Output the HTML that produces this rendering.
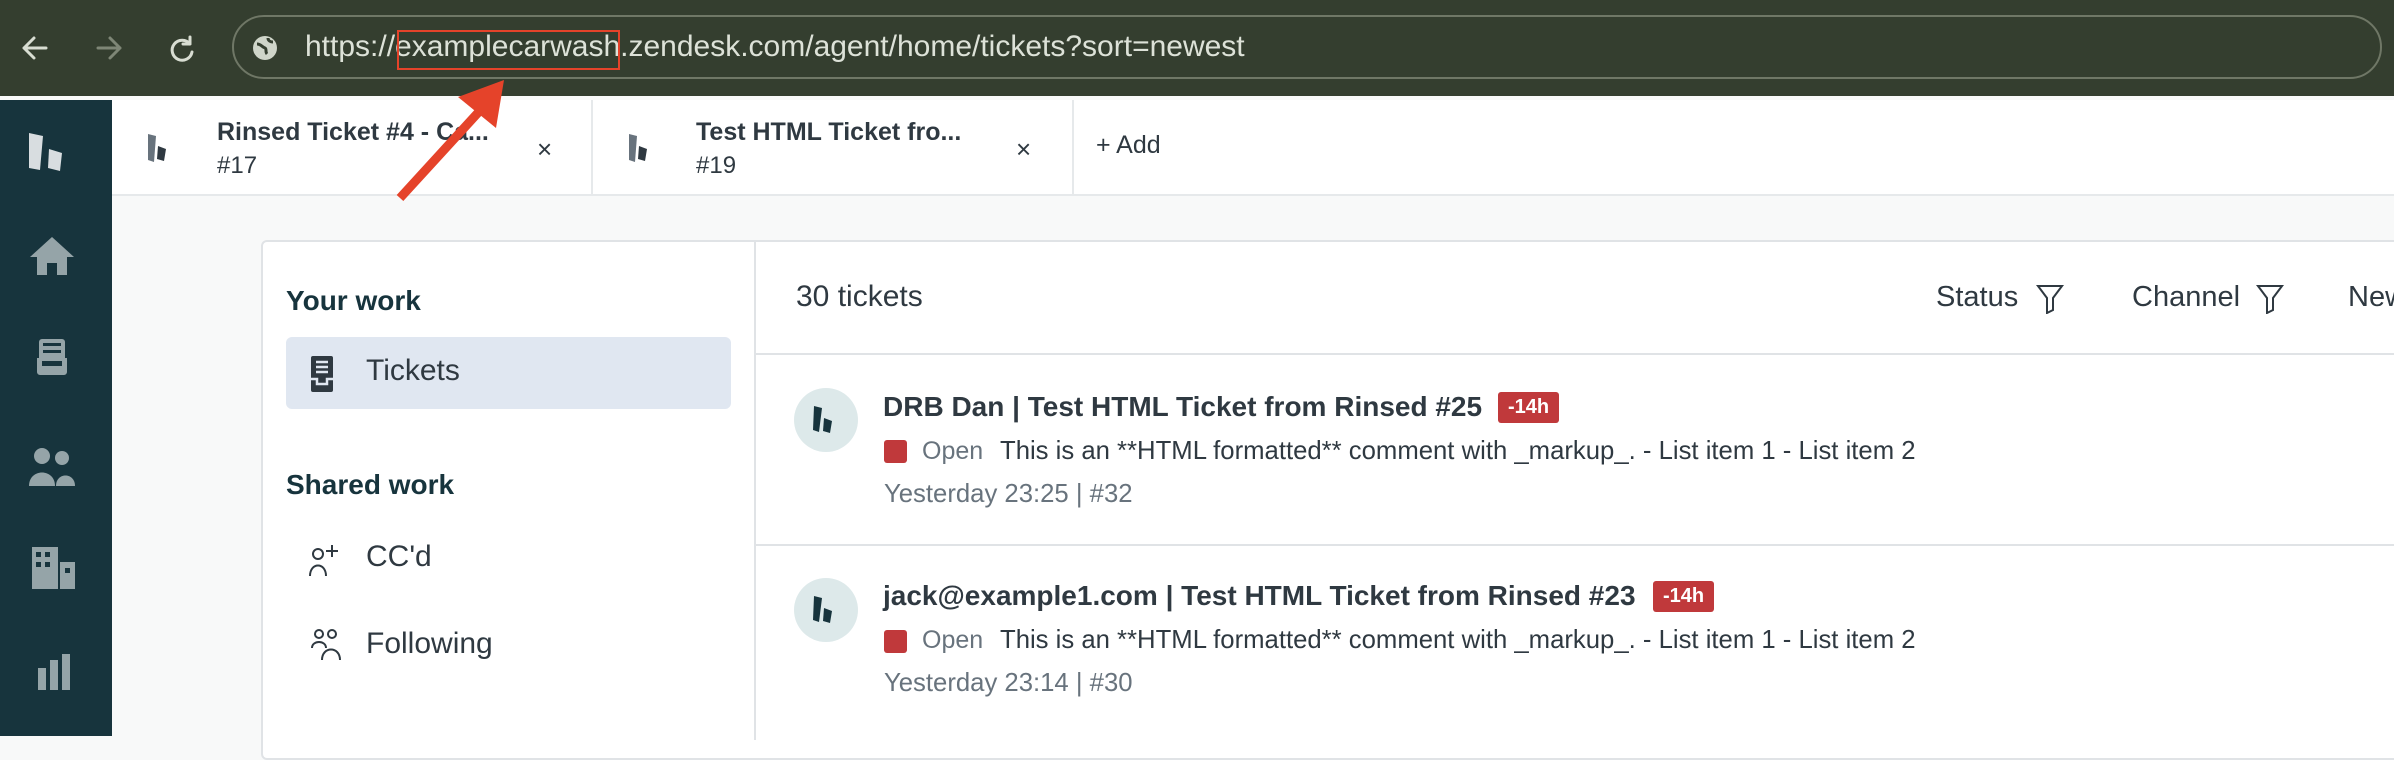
<!DOCTYPE html>
<html><head><style>
*{margin:0;padding:0;box-sizing:border-box}
body{width:2394px;height:736px;overflow:hidden;font-family:"Liberation Sans",sans-serif;background:#f8f9f9;position:relative}
.a{position:absolute;white-space:nowrap}
</style></head><body>
<div class="a" style="left:0;top:0;width:2394px;height:96px;background:#343e2f"></div>
<div class="a" style="left:232px;top:15px;width:2150px;height:64px;border:2px solid #6f7766;border-radius:32px;background:#343e2f"></div>
<svg class="a" style="left:20px;top:34px" width="180" height="30" viewBox="0 0 180 30" fill="none" stroke-width="3" stroke-linecap="round" stroke-linejoin="round">
<path d="M4 14h22M14 4L4 14l10 10" stroke="#d8ddd2"/>
<path d="M78 14h22M90 4l10 10-10 10" stroke="#7e8676"/>
<path d="M170 10a10 10 0 1 0 2 8M170 3v7h-7" stroke="#d8ddd2"/>
</svg>
<svg class="a" style="left:252px;top:35px" width="26" height="26" viewBox="0 0 26 26"><circle cx="13" cy="13" r="12" fill="#cfd5c9"/><path d="M5 9c4 0 5 3 8 4 2 1 0 4 2 6M16 3c0 3 3 4 5 4" stroke="#343e2f" stroke-width="3" fill="none"/></svg>
<div class="a" style="left:305px;top:30px;font-size:30px;color:#dde2d8">https://examplecarwash.zendesk.com/agent/home/tickets?sort=newest</div>
<div class="a" style="left:397px;top:30px;width:223px;height:40px;border:2px solid #e5432a"></div>

<div class="a" style="left:0;top:100px;width:112px;height:636px;background:#17343d"></div>
<svg class="a" style="left:27px;top:131px" width="50" height="42" viewBox="0 0 50 42"><path d="M2 2l14 3-3 34-11-2z" fill="#d8dde0"/><path d="M22 18l13 4-2 18-12-3z" fill="#d8dde0"/></svg>
<svg class="a" style="left:0;top:230px" width="112" height="470" viewBox="0 0 112 470" fill="#95a4a8">
<path d="M52 7L30 27h7v18h10V33h10v12h10V27h7z"/>
<rect x="39" y="109" width="26" height="22" rx="3"/><path d="M37 128h5v8h20v-8h5v14a3 3 0 0 1-3 3H40a3 3 0 0 1-3-3z"/>
<circle cx="42" cy="226" r="8"/><path d="M29 256c0-18 26-18 26 0z"/><circle cx="62" cy="228" r="7"/><path d="M56 256c0-14 19-14 19 0z"/>
<path d="M32 317h26v42H32zM60 332h15v27H60z"/>
<rect x="38" y="438" width="8" height="22"/><rect x="50" y="430" width="8" height="30"/><rect x="62" y="424" width="8" height="36"/>
</svg>
<svg class="a" style="left:0;top:230px" width="112" height="470" viewBox="0 0 112 470" fill="#17343d"><rect x="43" y="113" width="18" height="3"/><rect x="43" y="120" width="18" height="3"/><rect x="36" y="322" width="5" height="5"/><rect x="45" y="322" width="5" height="5"/><rect x="36" y="332" width="5" height="5"/><rect x="45" y="332" width="5" height="5"/><rect x="65" y="338" width="5" height="5"/></svg>

<div class="a" style="left:112px;top:100px;width:2282px;height:96px;background:#fff;border-bottom:2px solid #e6e9eb"></div>
<div class="a" style="left:591px;top:100px;width:2px;height:96px;background:#e6e9eb"></div>
<div class="a" style="left:1072px;top:100px;width:2px;height:96px;background:#e6e9eb"></div>
<svg class="a" style="left:146px;top:132px" width="36" height="32"><path d="M2 2l8 2-2 26-6-2z" fill="#68737d"/><path d="M12 14l8 3-2 12-7-2z" fill="#2f3941"/></svg>
<svg class="a" style="left:627px;top:132px" width="36" height="32"><path d="M2 2l8 2-2 26-6-2z" fill="#68737d"/><path d="M12 14l8 3-2 12-7-2z" fill="#2f3941"/></svg>
<div class="a" style="left:217px;top:118px;font-size:25px;font-weight:bold;color:#2f3941">Rinsed Ticket #4 - Ca...</div>
<div class="a" style="left:217px;top:152px;font-size:24px;color:#2f3941">#17</div>
<div class="a" style="left:537px;top:134px;font-size:26px;color:#2f3941">×</div>
<div class="a" style="left:696px;top:118px;font-size:25px;font-weight:bold;color:#2f3941">Test HTML Ticket fro...</div>
<div class="a" style="left:696px;top:152px;font-size:24px;color:#2f3941">#19</div>
<div class="a" style="left:1016px;top:134px;font-size:26px;color:#2f3941">×</div>
<div class="a" style="left:1096px;top:131px;font-size:25px;color:#2f3941">+ Add</div>

<div class="a" style="left:261px;top:240px;width:2200px;height:520px;background:#fff;border:2px solid #e0e3e6;border-radius:6px"></div>
<div class="a" style="left:754px;top:240px;width:2px;height:500px;background:#e0e3e6"></div>
<div class="a" style="left:756px;top:353px;width:1700px;height:2px;background:#e0e3e6"></div>
<div class="a" style="left:756px;top:544px;width:1700px;height:2px;background:#e0e3e6"></div>
<div class="a" style="left:286px;top:285px;font-size:28px;font-weight:bold;color:#17343d">Your work</div>
<div class="a" style="left:286px;top:337px;width:445px;height:72px;background:#e0e7f1;border-radius:6px"></div>
<svg class="a" style="left:310px;top:355px" width="24" height="38"><rect x="1" y="1" width="22" height="36" rx="2" fill="#2f3941"/><path d="M6 7h12M6 12h12M6 17h12M1 24h6v5h10v-5h6" stroke="#e0e7f1" stroke-width="2.5" fill="none"/></svg>
<div class="a" style="left:366px;top:354px;font-size:30px;color:#2f3941">Tickets</div>
<div class="a" style="left:286px;top:469px;font-size:28px;font-weight:bold;color:#17343d">Shared work</div>
<svg class="a" style="left:308px;top:542px" width="36" height="36" fill="none" stroke="#2f3941" stroke-width="2"><circle cx="10" cy="12" r="5"/><path d="M2 34c0-14 16-14 16 0M24 3v12M18 9h12"/></svg>
<div class="a" style="left:366px;top:540px;font-size:30px;color:#2f3941">CC'd</div>
<svg class="a" style="left:310px;top:628px" width="36" height="34" fill="none" stroke="#2f3941" stroke-width="2"><circle cx="9" cy="6" r="4"/><circle cx="22" cy="6" r="4"/><path d="M2 20c0-8 14-8 14 0M12 32c0-14 18-14 18 0"/></svg>
<div class="a" style="left:366px;top:627px;font-size:30px;color:#2f3941">Following</div>

<div class="a" style="left:796px;top:280px;font-size:30px;color:#2f3941">30 tickets</div>
<div class="a" style="left:1936px;top:281px;font-size:29px;color:#2f3941">Status</div>
<svg class="a" style="left:2036px;top:284px" width="28" height="30" fill="none" stroke="#2f3941" stroke-width="2"><path d="M2 2h24L17 14v12l-6 3V14z"/></svg>
<div class="a" style="left:2132px;top:281px;font-size:29px;color:#2f3941">Channel</div>
<svg class="a" style="left:2256px;top:284px" width="28" height="30" fill="none" stroke="#2f3941" stroke-width="2"><path d="M2 2h24L17 14v12l-6 3V14z"/></svg>
<div class="a" style="left:2348px;top:281px;font-size:29px;color:#2f3941">New</div>

<div class="a" style="left:794px;top:388px;width:64px;height:64px;border-radius:50%;background:#dde9ea"></div>
<svg class="a" style="left:810px;top:404px" width="36" height="32"><path d="M4 2l8 2-3 24-6-2z" fill="#17343d"/><path d="M14 14l8 3-2 12-7-2z" fill="#17343d"/></svg>
<div class="a" style="left:883px;top:391px;font-size:28px;font-weight:bold;color:#2f3941">DRB Dan | Test HTML Ticket from Rinsed #25</div>
<div class="a" style="left:1498px;top:392px;width:61px;height:31px;background:#c0393b;border-radius:3px;color:#fff;font-size:20px;font-weight:bold;text-align:center;line-height:31px">-14h</div>
<div class="a" style="left:884px;top:440px;width:23px;height:23px;background:#c0393b;border-radius:3px"></div>
<div class="a" style="left:922px;top:437px;font-size:25px;color:#68737d">Open</div>
<div class="a" style="left:1000px;top:437px;font-size:25.7px;color:#2f3941">This is an **HTML formatted** comment with _markup_. - List item 1 - List item 2</div>
<div class="a" style="left:884px;top:480px;font-size:25.7px;color:#68737d">Yesterday 23:25 | #32</div>

<div class="a" style="left:794px;top:578px;width:64px;height:64px;border-radius:50%;background:#dde9ea"></div>
<svg class="a" style="left:810px;top:594px" width="36" height="32"><path d="M4 2l8 2-3 24-6-2z" fill="#17343d"/><path d="M14 14l8 3-2 12-7-2z" fill="#17343d"/></svg>
<div class="a" style="left:883px;top:580px;font-size:28px;font-weight:bold;color:#2f3941">jack@example1.com | Test HTML Ticket from Rinsed #23</div>
<div class="a" style="left:1653px;top:581px;width:61px;height:31px;background:#c0393b;border-radius:3px;color:#fff;font-size:20px;font-weight:bold;text-align:center;line-height:31px">-14h</div>
<div class="a" style="left:884px;top:630px;width:23px;height:23px;background:#c0393b;border-radius:3px"></div>
<div class="a" style="left:922px;top:626px;font-size:25px;color:#68737d">Open</div>
<div class="a" style="left:1000px;top:626px;font-size:25.7px;color:#2f3941">This is an **HTML formatted** comment with _markup_. - List item 1 - List item 2</div>
<div class="a" style="left:884px;top:669px;font-size:25.7px;color:#68737d">Yesterday 23:14 | #30</div>

<svg class="a" style="left:0;top:0" width="700" height="220"><path d="M400 198L486 104" stroke="#e5432a" stroke-width="9"/><path d="M504 80L458 97 496 128Z" fill="#e5432a"/></svg>
</body></html>
